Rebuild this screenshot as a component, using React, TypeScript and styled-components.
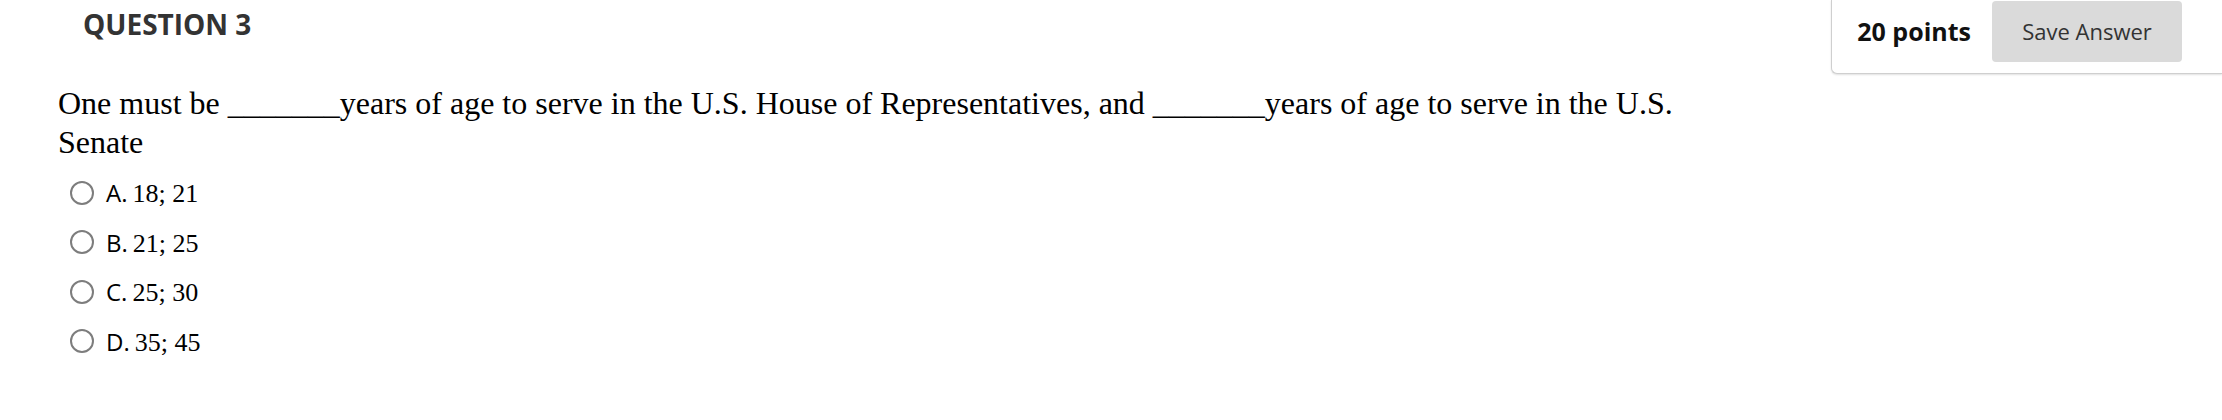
import React, { useState } from "react";
import styled, { createGlobalStyle } from "styled-components";

type Choice = {
    letter: string;
    text: string;
};

const choices: Choice[] = [
    { letter: "A.", text: "18; 21" },
    { letter: "B.", text: "21; 25" },
    { letter: "C.", text: "25; 30" },
    { letter: "D.", text: "35; 45" },
];

const GlobalStyle = createGlobalStyle`
body {
    margin: 0;
    background: #ffffff;
    font-family: "Open Sans", "Liberation Sans", sans-serif;
}
`;

const Page = styled.div`
width: 2222px;
min-height: 420px;
`;

const Header = styled.div`
display: flex;
justify-content: space-between;
align-items: flex-start;
`;

const Title = styled.h2`
margin: 0;
padding: 2px 0 0 83px;
font-family: "Open Sans", sans-serif;
font-weight: 700;
font-size: 28px;
line-height: 44px;
color: #333333;
`;

const PointsBox = styled.div`
display: flex;
align-items: center;
gap: 21px;
height: 74px;
box-sizing: border-box;
padding: 1px 40px 12px 25px;
border-left: 1px solid #cfcfcf;
border-bottom: 1px solid #cfcfcf;
border-bottom-left-radius: 6px;
box-shadow: 0 1px 2px rgba(0, 0, 0, 0.12);
background: #ffffff;
`;

const Points = styled.span`
font-family: "Open Sans", sans-serif;
font-weight: 700;
font-size: 25px;
color: #111111;
`;

const SaveButton = styled.button`
width: 190px;
height: 61px;
border: none;
border-radius: 4px;
background: #dadada;
color: #333333;
font-family: "Open Sans", sans-serif;
font-size: 22px;
cursor: pointer;
`;

const Body = styled.div`
padding: 0 0 0 58px;
`;

const Prompt = styled.p`
margin: 10px 0 0;
max-width: 1660px;
font-family: "Liberation Serif", "Times New Roman", serif;
font-size: 32px;
line-height: 39px;
color: #000000;
`;

const Options = styled.ul`
list-style: none;
margin: 6px 0 0;
padding: 0 0 0 12px;
display: flex;
flex-direction: column;
`;

const Option = styled.li`
display: flex;
align-items: center;
height: 49.5px;
gap: 12px;
cursor: pointer;
`;

const Radio = styled.span<{ $on: boolean }>`
width: 24px;
height: 24px;
box-sizing: border-box;
border-radius: 50%;
border: 2px solid #7d7d7d;
display: flex;
align-items: center;
justify-content: center;
&::after {
    content: "";
    width: 11px;
    height: 11px;
    border-radius: 50%;
    background: ${(p) => (p.$on ? "#333" : "transparent")};
}
`;

const Letter = styled.span`
font-family: "Open Sans", sans-serif;
font-size: 24px;
color: #000000;
margin-right: 5px;
`;

const Answer = styled.span`
font-family: "Liberation Serif", "Times New Roman", serif;
font-size: 26px;
color: #000000;
`;

const App = () => {
    const [picked, setPicked] = useState<number | null>(null);

    return (
        <Page>
            <GlobalStyle />
            <Header>
                <Title>QUESTION 3</Title>
                <PointsBox>
                    <Points>20 points</Points>
                    <SaveButton>Save Answer</SaveButton>
                </PointsBox>
            </Header>
            <Body>
                <Prompt>
                    One must be _______years of age to serve in the U.S. House of Representatives, and
                    _______years of age to serve in the U.S. Senate
                </Prompt>
                <Options>
                    {choices.map((c, i) => (
                        <Option key={c.letter} onClick={() => setPicked(i)}>
                            <Radio $on={picked === i} />
                            <span>
                                <Letter>{c.letter}</Letter>
                                <Answer>{c.text}</Answer>
                            </span>
                        </Option>
                    ))}
                </Options>
            </Body>
        </Page>
    );
};

export default App;
